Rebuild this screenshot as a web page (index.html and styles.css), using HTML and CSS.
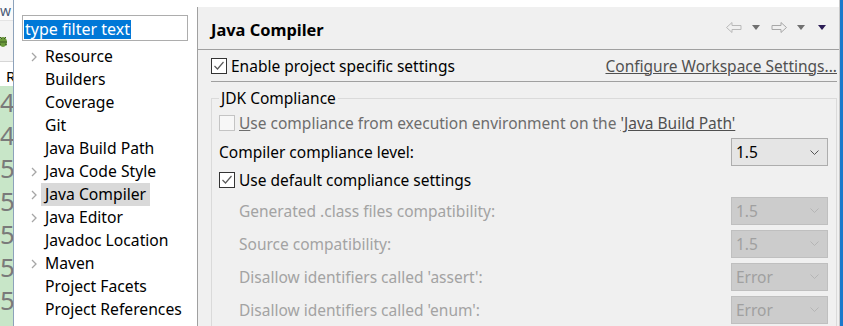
FILE: index.html
```html
<!DOCTYPE html>
<html lang="en">
<head>
  <meta charset="UTF-8">
  <title>Properties - Java Compiler</title>
  <link rel="stylesheet" href="styles.css">
</head>
<body>
  <div class="screen">
    <div class="backdrop">
      <div class="bd-menu">w</div>
      <div class="bd-tool">
        <svg width="9" height="16" viewBox="0 0 9 16"><ellipse cx="3" cy="9" rx="4" ry="5" fill="#6a9a3a"/><path d="M0 4l2 2M6 4l-2 2M-1 9h8M-1 12l2-1M7 12l-2-1" stroke="#3c5a22" stroke-width="1"/></svg>
      </div>
      <div class="bd-tab">R</div>
      <div class="bd-gutter">
        <div>4</div><div>4</div><div>5</div><div>5</div><div>5</div><div>5</div><div>5</div>
      </div>
    </div>
    <div class="dialog-edge"></div>

    <div class="tree-pane">
      <div class="filter"><span class="filter-sel">type filter text</span></div>
      <ul class="tree">
        <li><span class="twisty"><svg width="6" height="10" viewBox="0 0 6 10"><path d="M1 1l4 4-4 4" fill="none" stroke="#a6a6a6" stroke-width="1.3"/></svg></span><span class="label">Resource</span></li>
        <li><span class="twisty"></span><span class="label">Builders</span></li>
        <li><span class="twisty"></span><span class="label">Coverage</span></li>
        <li><span class="twisty"></span><span class="label">Git</span></li>
        <li><span class="twisty"></span><span class="label">Java Build Path</span></li>
        <li><span class="twisty"><svg width="6" height="10" viewBox="0 0 6 10"><path d="M1 1l4 4-4 4" fill="none" stroke="#a6a6a6" stroke-width="1.3"/></svg></span><span class="label">Java Code Style</span></li>
        <li><span class="twisty"><svg width="6" height="10" viewBox="0 0 6 10"><path d="M1 1l4 4-4 4" fill="none" stroke="#a6a6a6" stroke-width="1.3"/></svg></span><span class="label selected">Java Compiler</span></li>
        <li><span class="twisty"><svg width="6" height="10" viewBox="0 0 6 10"><path d="M1 1l4 4-4 4" fill="none" stroke="#a6a6a6" stroke-width="1.3"/></svg></span><span class="label">Java Editor</span></li>
        <li><span class="twisty"></span><span class="label">Javadoc Location</span></li>
        <li><span class="twisty"><svg width="6" height="10" viewBox="0 0 6 10"><path d="M1 1l4 4-4 4" fill="none" stroke="#a6a6a6" stroke-width="1.3"/></svg></span><span class="label">Maven</span></li>
        <li><span class="twisty"></span><span class="label">Project Facets</span></li>
        <li><span class="twisty"></span><span class="label">Project References</span></li>
      </ul>
    </div>

    <div class="page">
      <div class="page-top"></div>
      <div class="page-main">
        <div class="page-head">
          <h1>Java Compiler</h1>
          <div class="nav">
            <svg class="nav-back" width="16" height="11" viewBox="0 0 16 11"><path d="M0.5 5.5L6 0.5V3.5H15V7.5H6V10.5Z" fill="none" stroke="#b9b9b9"/></svg>
            <svg class="nav-drop" width="8" height="5" viewBox="0 0 8 5"><path d="M0 0H8L4 5Z" fill="#707070"/></svg>
            <svg class="nav-fwd" width="16" height="11" viewBox="0 0 16 11"><path d="M15.5 5.5L10 0.5V3.5H1V7.5H10V10.5Z" fill="none" stroke="#a8a8a8"/></svg>
            <svg class="nav-drop" width="8" height="5" viewBox="0 0 8 5"><path d="M0 0H8L4 5Z" fill="#707070"/></svg>
            <svg class="nav-menu" width="8" height="5" viewBox="0 0 8 5"><path d="M0 0H8L4 5Z" fill="#2c1d55"/></svg>
          </div>
        </div>

        <div class="page-body">
          <div class="enable-row">
            <label class="check">
              <span class="cb"><svg width="14" height="14" viewBox="0 0 14 14"><path d="M2.5 7l3 3 6-7" fill="none" stroke="#5a5a5a" stroke-width="1.2"/></svg></span>
              Enable project specific settings
            </label>
            <span class="link">Configure Workspace Settings...</span>
          </div>

          <fieldset class="group">
            <legend>JDK Compliance</legend>
            <div class="grid">
              <label class="check disabled span2">
                <span class="cb"></span>
                <span><u>U</u>se compliance from execution environment on the <span class="link">'Java Build Path'</span></span>
              </label>

              <span>Compiler compliance level:</span>
              <div class="combo">1.5<svg width="9" height="5" viewBox="0 0 9 5"><path d="M0.5 0.5l4 4 4-4" fill="none" stroke="#555"/></svg></div>

              <label class="check span2">
                <span class="cb"><svg width="14" height="14" viewBox="0 0 14 14"><path d="M2.5 7l3 3 6-7" fill="none" stroke="#5a5a5a" stroke-width="1.2"/></svg></span>
                Use default compliance settings
              </label>

              <span class="sub">Generated .class files compatibility:</span>
              <div class="combo off">1.5<svg width="9" height="5" viewBox="0 0 9 5"><path d="M0.5 0.5l4 4 4-4" fill="none" stroke="#b5b5b5"/></svg></div>

              <span class="sub">Source compatibility:</span>
              <div class="combo off">1.5<svg width="9" height="5" viewBox="0 0 9 5"><path d="M0.5 0.5l4 4 4-4" fill="none" stroke="#b5b5b5"/></svg></div>

              <span class="sub">Disallow identifiers called 'assert':</span>
              <div class="combo off">Error<svg width="9" height="5" viewBox="0 0 9 5"><path d="M0.5 0.5l4 4 4-4" fill="none" stroke="#b5b5b5"/></svg></div>

              <span class="sub">Disallow identifiers called 'enum':</span>
              <div class="combo off">Error<svg width="9" height="5" viewBox="0 0 9 5"><path d="M0.5 0.5l4 4 4-4" fill="none" stroke="#b5b5b5"/></svg></div>
            </div>
          </fieldset>
        </div>
      </div>
    </div>
    <div class="win-edge"></div>
  </div>
</body>
</html>
```

FILE: styles.css
```css
* {
  box-sizing: border-box;
}
body {
  margin: 0;
  width: 843px;
  height: 326px;
  overflow: hidden;
  font-family: "Noto Sans", "Open Sans", sans-serif;
  font-size: 15.5px;
  color: #000;
  background: #fff;
}
.screen {
  display: flex;
  height: 326px;
}

/* workbench peeking out behind the dialog */
.backdrop {
  width: 13px;
  flex: none;
  display: flex;
  flex-direction: column;
  overflow: hidden;
}
.bd-menu {
  height: 21px;
  background: #fbfbfb;
  color: #4a5b78;
  font-size: 14px;
  line-height: 22px;
  border-bottom: 1px solid #e4e4e4;
}
.bd-tool {
  height: 41px;
  background: #f4f4f4;
  border-bottom: 1px solid #d6d6d6;
  display: flex;
  align-items: center;
}
.bd-tab {
  height: 24px;
  background: #fff;
  font-size: 15px;
  line-height: 24px;
  padding-left: 6px;
  padding-top: 2px;
  white-space: nowrap;
  overflow: hidden;
}
.bd-gutter {
  flex: 1;
  background: #c8e6c8;
  color: #7a7a7a;
  font-size: 26px;
  line-height: 33px;
  overflow: hidden;
}
.dialog-edge {
  width: 1px;
  flex: none;
  background: #8da2bb;
}

/* left tree */
.tree-pane {
  width: 183px;
  flex: none;
  background: #fff;
  padding: 15px 0 0 8px;
}
.filter {
  width: 166px;
  height: 26px;
  border: 1px solid #adadad;
  padding: 2px 1px;
}
.filter-sel {
  display: inline-block;
  background: #0078d7;
  color: #fff;
  font-size: 16px;
  line-height: 19px;
  padding: 0 1px;
}
.tree {
  list-style: none;
  margin: 4px 0 0 0;
  padding: 0;
  font-size: 15.7px;
}
.tree li {
  display: flex;
  align-items: center;
  height: 23px;
  white-space: nowrap;
}
.twisty {
  width: 23px;
  padding-left: 9px;
  display: flex;
  align-items: center;
}
.label {
  margin-left: -4px;
  padding: 0 4px;
  line-height: 23px;
}
.label.selected {
  background: #d9d9d9;
}

/* right page */
.page {
  flex: 1;
  display: flex;
  flex-direction: column;
}
.page-top {
  height: 8px;
  background: #fff;
}
.page-main {
  flex: 1;
  background: #f0f0f0;
  border-left: 1px solid #a0a0a0;
}
.page-head {
  height: 43px;
  display: flex;
  justify-content: space-between;
  align-items: center;
  padding: 3px 13px 0 13px;
  border-bottom: 1px solid #a0a0a0;
}
.page-head h1 {
  margin: 0;
  font-size: 16.4px;
  font-weight: bold;
}
.nav {
  align-self: flex-start;
  margin-top: 12px;
  display: flex;
  align-items: center;
}
.nav-drop {
  margin-left: 10px;
}
.nav-fwd {
  margin-left: 11px;
}
.nav-menu {
  margin-left: 13px;
}
.page-body {
  padding: 0 2px 0 13px;
}
.enable-row {
  height: 32px;
  display: flex;
  align-items: center;
  justify-content: space-between;
  border-bottom: 1px solid #a0a0a0;
}
.check {
  display: flex;
  align-items: center;
  white-space: nowrap;
}
.cb {
  width: 16px;
  height: 16px;
  flex: none;
  margin-right: 4px;
  border: 1px solid #333;
  background: #fff;
  display: flex;
  align-items: center;
  justify-content: center;
}
.check.disabled {
  color: #6d6d6d;
}
.check.disabled .cb {
  border-color: #c4c4c4;
  background: #f7f7f7;
}
.link {
  color: #505050;
  text-decoration: underline;
}
.group {
  margin: 6px 0 0 0;
  padding: 0 8px 0 7px;
  border: 1px solid #dadada;
  border-bottom: none;
}
.group legend {
  margin-left: 0;
  padding: 0 2px;
  font-size: 15.5px;
  line-height: 20px;
}
.grid {
  display: grid;
  grid-template-columns: 1fr 97px;
  grid-template-rows: 30px 28px 28px 33px 33px 33px 33px;
  align-items: center;
}
.span2 {
  grid-column: 1 / 3;
}
.sub {
  padding-left: 20px;
  color: #a3a3a3;
}
.combo {
  height: 28px;
  display: flex;
  align-items: center;
  justify-content: space-between;
  padding: 0 8px 0 4px;
  background: #e5e5e5;
  border: 1px solid #adadad;
}
.combo.off {
  background: #cccccc;
  border-color: #bfbfbf;
  color: #a0a0a0;
}
.win-edge {
  width: 4px;
  flex: none;
  background: #1a79cc;
  border-left: 1px solid #c8c8c8;
}
```
